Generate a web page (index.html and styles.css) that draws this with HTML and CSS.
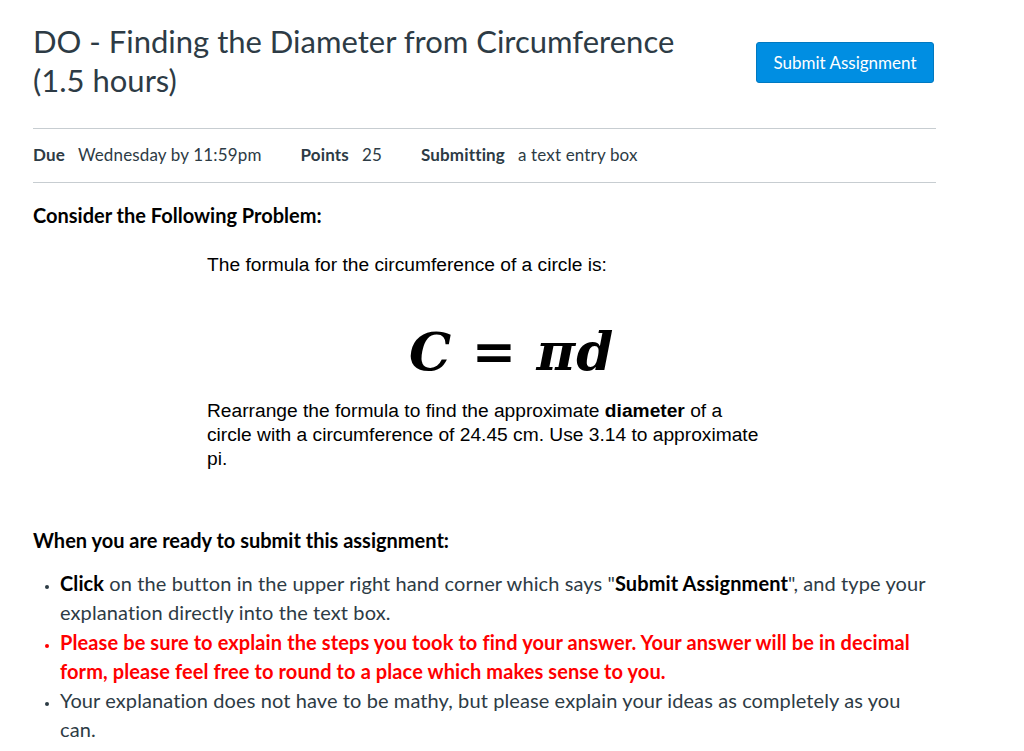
FILE: index.html
```html
<!DOCTYPE html>
<html>
<head>
<meta charset="utf-8">
<link rel="stylesheet" href="styles.css">
</head>
<body>
<div class="page">
  <div class="header">
    <h1 class="title">DO - Finding the Diameter from Circumference (1.5 hours)</h1>
    <button class="submit">Submit Assignment</button>
  </div>
  <div class="meta">
    <span class="item"><b>Due</b><span>Wednesday by 11:59pm</span></span>
    <span class="item"><b>Points</b><span>25</span></span>
    <span class="item"><b>Submitting</b><span>a text entry box</span></span>
  </div>
  <div class="desc">
    <h3 class="heading">Consider the Following Problem:</h3>
    <div class="problem">
      <p class="p1">The formula for the circumference of a circle is:</p>
      <div class="formula"><i>C</i> = <i>πd</i></div>
      <p class="p2">Rearrange the formula to find the approximate <b>diameter</b> of a circle with a circumference of 24.45 cm. Use 3.14 to approximate pi.</p>
    </div>
    <h3 class="heading h2">When you are ready to submit this assignment:</h3>
    <ul class="list">
      <li><b>Click</b> on the button in the upper right hand corner which says "<b>Submit Assignment</b>", and type your explanation directly into the text box.</li>
      <li class="red">Please be sure to explain the steps you took to find your answer. Your answer will be in decimal form, please feel free to round to a place which makes sense to you.</li>
      <li>Your explanation does not have to be mathy, but please explain your ideas as completely as you can.</li>
    </ul>
  </div>
</div>
</body>
</html>
```
FILE: styles.css
```css
* { box-sizing: border-box; }
body {
  margin: 0;
  background: #fff;
  font-family: Lato, "Open Sans", sans-serif;
  color: #2d3b45;
}
.page {
  width: 903px;
  margin-left: 33px;
  padding-top: 22px;
}
.header {
  display: flex;
  justify-content: space-between;
  align-items: flex-start;
  padding-bottom: 28px;
  border-bottom: 1px solid #c7cdd1;
}
.title {
  margin: 0;
  width: 680px;
  font-size: 31px;
  font-weight: 400;
  line-height: 39px;
  color: #2d3b45;
}
.submit {
  margin-top: 20px;
  margin-right: 2px;
  width: 178px;
  height: 41px;
  background: #008ee2;
  color: #fff;
  border: 1px solid #0079c1;
  border-radius: 3px;
  font-family: Lato, sans-serif;
  font-size: 17px;
  padding: 0;
}
.meta {
  display: flex;
  align-items: center;
  height: 54px;
  padding-bottom: 2px;
  border-bottom: 1px solid #c7cdd1;
  font-size: 17px;
  letter-spacing: 0.15px;
}
.item { margin-right: 39px; }
.item b { font-weight: 700; margin-right: 13px; }
.item span { color: #2d3b45; }
.desc { color: #000; }
.heading {
  margin: 20px 0 0;
  font-size: 20px;
  font-weight: 700;
  line-height: 24px;
}
.problem {
  margin-left: 174px;
  width: 553px;
  font-family: Arial, "Liberation Sans", sans-serif;
  font-size: 19.2px;
  color: #000;
}
.p1 { margin: 26px 0 0; line-height: 24px; }
.formula {
  font-family: "DejaVu Serif", "Liberation Serif", serif;
  font-weight: 700;
  font-size: 53px;
  line-height: 70px;
  margin: 39px 0 0 202px;
  letter-spacing: 1px;
}
.formula i { font-style: italic; }
.p2 { margin: 13px 0 0; line-height: 24px; }
.h2 { margin-top: 57px; }
.list {
  margin: 17px 0 0;
  padding-left: 27px;
  font-size: 20px;
  letter-spacing: 0.1px;
  line-height: 29.3px;
  color: #2d3b45;
}
.list li::marker { font-size: 13px; }
.list b { color: #000; }
.red { color: #ff0000; font-weight: 700; }
```
